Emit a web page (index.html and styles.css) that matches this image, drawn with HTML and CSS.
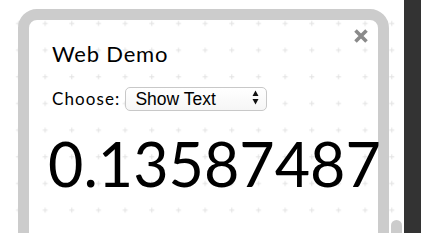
FILE: index.html
```html
<!DOCTYPE html>
<html>
<head>
<meta charset="utf-8">
<link rel="stylesheet" href="styles.css">
</head>
<body>
<div class="page">
  <main class="stage">
    <svg class="grid" width="100%" height="100%" aria-hidden="true">
      <defs>
        <pattern id="plus" patternUnits="userSpaceOnUse" width="26.667" height="26.667">
          <rect x="16" y="23" width="5" height="1" fill="#e2e2e2"/>
          <rect x="18" y="21" width="1" height="5" fill="#e2e2e2"/>
        </pattern>
      </defs>
      <rect width="100%" height="100%" fill="url(#plus)"/>
    </svg>
    <section class="card">
      <button class="close" aria-label="Close">
        <svg width="16" height="16" viewBox="0 0 16 16"><path d="M2.5 2.5 L13.5 13.5 M13.5 2.5 L2.5 13.5" stroke="#8a8a8a" stroke-width="3.6" stroke-linecap="butt"/></svg>
      </button>
      <h1 class="title">Web Demo</h1>
      <div class="row">
        <label class="label" for="mode">Choose:</label>
        <div class="select-wrap">
          <select id="mode" class="select">
            <option>Show Text</option>
          </select>
          <svg class="arrows" width="7" height="15" viewBox="0 0 7 15"><path d="M3.5 0.5 L6.5 6 L0.5 6 Z M0.5 9 L6.5 9 L3.5 14.5 Z" fill="#111"/></svg>
        </div>
      </div>
      <div class="value">0.13587487</div>
    </section>
    <div class="thumb"></div>
  </main>
  <aside class="sidebar"></aside>
</div>
</body>
</html>
```
FILE: styles.css
```css
html, body {
  margin: 0;
  padding: 0;
  background: #fff;
  overflow: hidden;
}
body {
  width: 421px;
  height: 233px;
  font-family: "Lato", "Liberation Sans", sans-serif;
  color: #000;
}
.page {
  display: flex;
  height: 233px;
}
.stage {
  position: relative;
  flex: 1;
  overflow: hidden;
  padding: 9px 0 0 18px;
  box-sizing: border-box;
}
.grid {
  position: absolute;
  inset: 0;
  z-index: 0;
}
.sidebar {
  width: 17px;
  background: #333;
}
.card {
  position: relative;
  z-index: 1;
  width: 371px;
  height: 300px;
  box-sizing: border-box;
  border: 11px solid #cccccc;
  border-radius: 19px;
  padding: 22px 0 0 23px;
}
.close {
  position: absolute;
  top: 8px;
  right: 9px;
  width: 16px;
  height: 16px;
  padding: 0;
  border: 0;
  background: none;
  display: block;
}
.close svg { display: block; }
.title {
  margin: 0;
  font-size: 22px;
  font-weight: 400;
  line-height: 24px;
  letter-spacing: 0.8px;
}
.row {
  display: flex;
  align-items: center;
  gap: 5px;
  margin-top: 21px;
}
.label {
  font-size: 17px;
  line-height: 20px;
  letter-spacing: 1.1px;
}
.select-wrap {
  position: relative;
}
.select {
  appearance: none;
  -webkit-appearance: none;
  width: 142px;
  height: 24px;
  box-sizing: border-box;
  border: 1px solid #c8c8c8;
  border-radius: 5px;
  background: linear-gradient(#fff, #f6f6f6);
  font-family: "Liberation Sans", Arial, sans-serif;
  font-size: 17.5px;
  color: #000;
  padding: 0 0 0 9px;
  margin: 0;
  display: block;
}
.arrows {
  position: absolute;
  right: 8px;
  top: 3px;
  pointer-events: none;
}
.value {
  margin: 18px 0 0 -4px;
  font-size: 61px;
  line-height: 70px;
  font-weight: 400;
  white-space: nowrap;
}
.thumb {
  position: absolute;
  left: 391px;
  top: 220px;
  width: 11px;
  height: 30px;
  background: #cccccc;
  border-radius: 6px 6px 0 0;
}
```
